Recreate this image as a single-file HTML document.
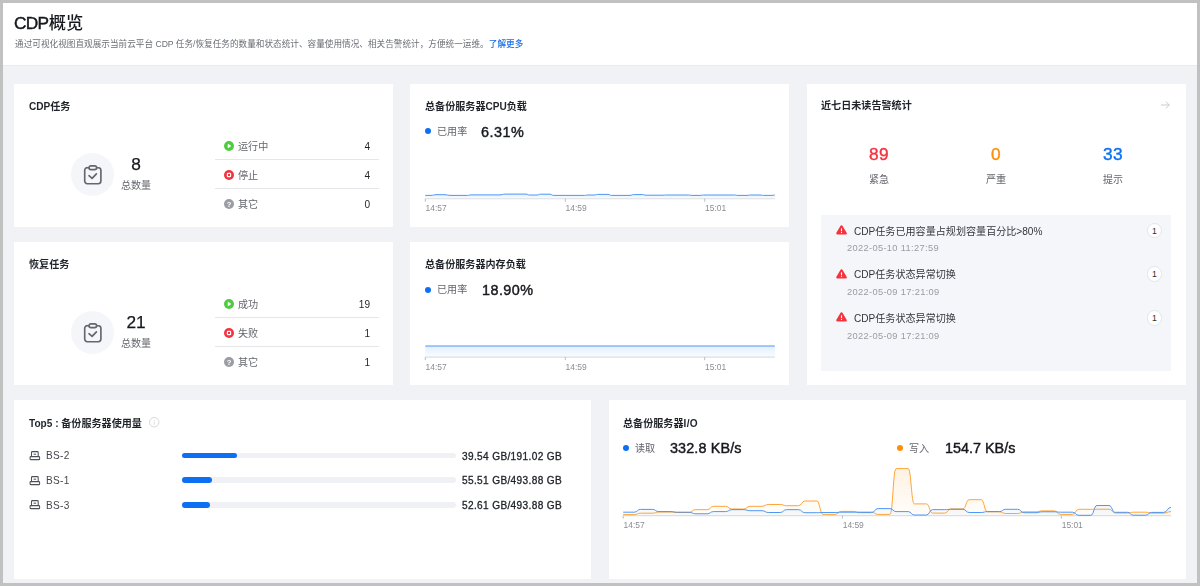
<!DOCTYPE html>
<html lang="zh-CN">
<head>
<meta charset="utf-8">
<title>CDP概览</title>
<style>
*{margin:0;padding:0;box-sizing:border-box}
html,body{width:1200px;height:586px;overflow:hidden}
body{position:relative;background:#c1c1c1;font-family:"Liberation Sans","Noto Sans CJK SC",sans-serif;color:#1f2329;-webkit-font-smoothing:antialiased}
.page{position:absolute;left:3px;top:3px;width:1194px;height:580px;background:#f0f2f6;overflow:hidden}
.hdr{position:absolute;left:0;top:0;width:1194px;height:62.6px;background:#fff;border-bottom:1px solid #e9ebef}
.card{position:absolute;background:#fff}
.t{position:absolute;margin-top:0.8px;will-change:transform;white-space:nowrap;line-height:14px;height:14px;font-size:10.08px}
.ttl{font-weight:700;color:#1f2329}
.h1{font-size:17.28px;line-height:22px;height:22px;font-weight:500;color:#16181d;margin-top:0}
.h1 i{font-style:normal;-webkit-text-stroke:0.45px #16181d;letter-spacing:-0.75px;margin-right:0.5px}
.sub{margin-top:0;font-size:8.64px;color:#6b6f76}
.sub b{font-weight:500;color:#1a6fe8}
.g{color:#63666d}
.big{margin-top:0.4px;font-size:17.28px;line-height:22px;height:22px;color:#16181d;-webkit-text-stroke:0.25px currentColor}
.mid{margin-top:0.5px;font-size:14.4px;line-height:18px;height:18px;color:#16181d;-webkit-text-stroke:0.42px currentColor}
.c{transform:translateX(-50%);text-align:center}
.r{transform:translateX(-100%);text-align:right}
.sep{position:absolute;height:0.8px;background:#e4e6ea}
.dot{position:absolute;width:6px;height:6px;border-radius:50%}
.circ{position:absolute;width:43.2px;height:43.2px;border-radius:50%;background:#f5f6fa}
.ico{will-change:transform;position:absolute;overflow:visible}
.box{position:absolute;background:#f5f6fa}
.date{font-size:9.3px;color:#999ca3;letter-spacing:0.33px}
.badge{position:absolute;width:15.8px;height:15.8px;border-radius:50%;background:#fff;border:0.8px solid #e3e5e9;font-size:8.64px;line-height:14.2px;text-align:center;color:#2b2e34;font-weight:400}
.track{position:absolute;height:5.8px;border-radius:3px;background:#f0f1f5}
.bar{position:absolute;left:0;top:0;height:5.8px;border-radius:3px;background:#0d70f2}
.val{color:#1f2329;letter-spacing:0.36px;-webkit-text-stroke:0.32px #1f2329}
.charts{will-change:transform;position:absolute;left:0;top:0;pointer-events:none}
.ax{font-family:"Liberation Sans",sans-serif;font-size:8.45px;fill:#8a8d94}

.num{letter-spacing:0.5px;-webkit-text-stroke:0.4px currentColor}
.bs{color:#43464c;letter-spacing:0.3px}

</style>
</head>
<body>
<div class="page"></div>
<div class="hdr" style="left:3px;top:3px"></div>
<div class="t h1" style="left:14.1px;top:12px"><i>CDP</i>概览</div>
<div class="t sub" style="left:14.8px;top:37px">通过可视化视图直观展示当前云平台 CDP 任务/恢复任务的数量和状态统计、容量使用情况、相关告警统计，方便统一运维。<b>了解更多</b></div>

<!-- cards -->
<div class="card" style="left:14.4px;top:83.8px;width:379px;height:143.6px"></div>
<div class="card" style="left:14.4px;top:241.8px;width:379px;height:143.4px"></div>
<div class="card" style="left:410.4px;top:83.8px;width:379px;height:143.6px"></div>
<div class="card" style="left:410.4px;top:241.8px;width:379px;height:143.4px"></div>
<div class="card" style="left:806.6px;top:83.8px;width:379.1px;height:301.4px"></div>
<div class="card" style="left:14.4px;top:399.9px;width:577px;height:178.9px"></div>
<div class="card" style="left:609px;top:399.9px;width:576.5px;height:178.9px"></div>

<!-- card 1: CDP任务 -->
<div class="t ttl" style="left:29px;top:99.2px">CDP任务</div>
<div class="circ" style="left:70.9px;top:152.8px"></div>
<svg class="ico" style="left:83.5px;top:164.8px" width="18" height="20" viewBox="0 0 18 20"><rect x="0.7" y="2.7" width="16.2" height="16" rx="2.6" fill="none" stroke="#63666d" stroke-width="1.65"/><rect x="5" y="0.8" width="7.6" height="3.8" rx="1.9" fill="#f5f6fa" stroke="#63666d" stroke-width="1.65"/><path d="M5 10.7 L8.1 13.3 L12.4 8.8" fill="none" stroke="#63666d" stroke-width="1.7" stroke-linecap="round" stroke-linejoin="round"/></svg>
<div class="t big c" style="left:136.4px;top:152.8px">8</div>
<div class="t g c" style="left:136.3px;top:178.2px">总数量</div>

<svg class="ico" style="left:224.1px;top:141.3px" width="10" height="10" viewBox="0 0 10 10"><circle cx="5" cy="5" r="5" fill="#4fcb3f"/><path d="M4.15 3.2 L4.15 6.8 L6.7 5 Z" fill="#fff" stroke="#fff" stroke-width="0.85" stroke-linejoin="round"/></svg>
<div class="t g" style="left:237.8px;top:139.1px">运行中</div>
<div class="t r" style="left:370.2px;top:139.1px">4</div>
<div class="sep" style="left:214.8px;top:159px;width:164px"></div>
<svg class="ico" style="left:224.1px;top:170.2px" width="10" height="10" viewBox="0 0 10 10"><circle cx="5" cy="5" r="5" fill="#f5333f"/><rect x="3.4" y="3.4" width="3.2" height="3.2" rx="0.6" fill="#f5333f" stroke="#fff" stroke-width="1.2"/></svg>
<div class="t g" style="left:237.8px;top:168px">停止</div>
<div class="t r" style="left:370.2px;top:168px">4</div>
<div class="sep" style="left:214.8px;top:188px;width:164px"></div>
<svg class="ico" style="left:224.1px;top:199px" width="10" height="10" viewBox="0 0 10 10"><circle cx="5" cy="5" r="5" fill="#9b9da4"/><text x="5" y="7.8" text-anchor="middle" font-family="Liberation Sans, sans-serif" font-size="7.6" font-weight="700" fill="#fff">?</text></svg>
<div class="t g" style="left:237.8px;top:196.8px">其它</div>
<div class="t r" style="left:370.2px;top:196.8px">0</div>

<!-- card 2: 恢复任务 -->
<div class="t ttl" style="left:29px;top:257.2px">恢复任务</div>
<div class="circ" style="left:70.9px;top:311px"></div>
<svg class="ico" style="left:83.5px;top:322.8px" width="18" height="20" viewBox="0 0 18 20"><rect x="0.7" y="2.7" width="16.2" height="16" rx="2.6" fill="none" stroke="#63666d" stroke-width="1.65"/><rect x="5" y="0.8" width="7.6" height="3.8" rx="1.9" fill="#f5f6fa" stroke="#63666d" stroke-width="1.65"/><path d="M5 10.7 L8.1 13.3 L12.4 8.8" fill="none" stroke="#63666d" stroke-width="1.7" stroke-linecap="round" stroke-linejoin="round"/></svg>
<div class="t big c" style="left:136.4px;top:310.8px">21</div>
<div class="t g c" style="left:136.3px;top:336.2px">总数量</div>

<svg class="ico" style="left:224.1px;top:299.3px" width="10" height="10" viewBox="0 0 10 10"><circle cx="5" cy="5" r="5" fill="#4fcb3f"/><path d="M4.15 3.2 L4.15 6.8 L6.7 5 Z" fill="#fff" stroke="#fff" stroke-width="0.85" stroke-linejoin="round"/></svg>
<div class="t g" style="left:237.8px;top:297.1px">成功</div>
<div class="t r" style="left:370.2px;top:297.1px">19</div>
<div class="sep" style="left:214.8px;top:317px;width:164px"></div>
<svg class="ico" style="left:224.1px;top:328.2px" width="10" height="10" viewBox="0 0 10 10"><circle cx="5" cy="5" r="5" fill="#f5333f"/><rect x="3.4" y="3.4" width="3.2" height="3.2" rx="0.6" fill="#f5333f" stroke="#fff" stroke-width="1.2"/></svg>
<div class="t g" style="left:237.8px;top:326px">失败</div>
<div class="t r" style="left:370.2px;top:326px">1</div>
<div class="sep" style="left:214.8px;top:346px;width:164px"></div>
<svg class="ico" style="left:224.1px;top:357px" width="10" height="10" viewBox="0 0 10 10"><circle cx="5" cy="5" r="5" fill="#9b9da4"/><text x="5" y="7.8" text-anchor="middle" font-family="Liberation Sans, sans-serif" font-size="7.6" font-weight="700" fill="#fff">?</text></svg>
<div class="t g" style="left:237.8px;top:354.8px">其它</div>
<div class="t r" style="left:370.2px;top:354.8px">1</div>

<!-- card 3: CPU -->
<div class="t ttl" style="left:425.2px;top:99.2px">总备份服务器CPU负载</div>
<div class="dot" style="left:425.1px;top:128.4px;background:#0d70f2"></div>
<div class="t g" style="left:436.9px;top:124.2px">已用率</div>
<div class="t mid" style="left:481.4px;top:122.1px;letter-spacing:0.5px">6.31%</div>

<!-- card 4: MEM -->
<div class="t ttl" style="left:425.2px;top:257.2px">总备份服务器内存负载</div>
<div class="dot" style="left:425.1px;top:286.7px;background:#0d70f2"></div>
<div class="t g" style="left:436.9px;top:282.4px">已用率</div>
<div class="t mid" style="left:482.2px;top:280.3px;letter-spacing:0.45px">18.90%</div>

<!-- card 5: alerts -->
<div class="t ttl" style="left:821.2px;top:98.6px">近七日未读告警统计</div>
<svg class="ico" style="left:1161.2px;top:101.4px" width="9" height="8" viewBox="0 0 9 8"><path d="M0.3 4 H8 M5.2 0.9 L8.2 4 L5.2 7.1" fill="none" stroke="#c4c7cc" stroke-width="0.9" stroke-linecap="round" stroke-linejoin="round"/></svg>
<div class="t big c num" style="left:879.2px;top:143.1px;color:#f5333f">89</div>
<div class="t big c num" style="left:996px;top:143.1px;color:#ff8f0a">0</div>
<div class="t big c num" style="left:1112.8px;top:143.1px;color:#0d70f2">33</div>
<div class="t g c" style="left:879.2px;top:172.6px">紧急</div>
<div class="t g c" style="left:996px;top:172.6px">严重</div>
<div class="t g c" style="left:1112.8px;top:172.6px">提示</div>
<div class="box" style="left:821px;top:214.6px;width:350px;height:156.4px"></div>

<svg class="ico" style="left:835.8px;top:225px" width="11" height="10" viewBox="0 0 11 10"><path d="M5.5 1.6 L9.5 8.3 L1.5 8.3 Z" fill="#f5333f" stroke="#f5333f" stroke-width="2.6" stroke-linejoin="round"/><rect x="4.95" y="3.2" width="1.1" height="3.1" rx="0.3" fill="#fff"/><rect x="4.95" y="7" width="1.1" height="1.1" rx="0.3" fill="#fff"/></svg>
<div class="t" style="left:854.4px;top:224px;color:#33363c">CDP任务已用容量占规划容量百分比&gt;80%</div>
<div class="t date" style="left:847.1px;top:240.3px">2022-05-10 11:27:59</div>
<div class="badge" style="left:1146.6px;top:222.5px">1</div>

<svg class="ico" style="left:835.8px;top:268.7px" width="11" height="10" viewBox="0 0 11 10"><path d="M5.5 1.6 L9.5 8.3 L1.5 8.3 Z" fill="#f5333f" stroke="#f5333f" stroke-width="2.6" stroke-linejoin="round"/><rect x="4.95" y="3.2" width="1.1" height="3.1" rx="0.3" fill="#fff"/><rect x="4.95" y="7" width="1.1" height="1.1" rx="0.3" fill="#fff"/></svg>
<div class="t" style="left:854.4px;top:267.7px;color:#33363c">CDP任务状态异常切换</div>
<div class="t date" style="left:847.1px;top:284.7px">2022-05-09 17:21:09</div>
<div class="badge" style="left:1146.6px;top:266.2px">1</div>

<svg class="ico" style="left:835.8px;top:312.4px" width="11" height="10" viewBox="0 0 11 10"><path d="M5.5 1.6 L9.5 8.3 L1.5 8.3 Z" fill="#f5333f" stroke="#f5333f" stroke-width="2.6" stroke-linejoin="round"/><rect x="4.95" y="3.2" width="1.1" height="3.1" rx="0.3" fill="#fff"/><rect x="4.95" y="7" width="1.1" height="1.1" rx="0.3" fill="#fff"/></svg>
<div class="t" style="left:854.4px;top:311.4px;color:#33363c">CDP任务状态异常切换</div>
<div class="t date" style="left:847.1px;top:328.4px">2022-05-09 17:21:09</div>
<div class="badge" style="left:1146.6px;top:309.9px">1</div>

<!-- card 6: Top5 -->
<div class="t ttl" style="left:29.3px;top:416px">Top5 : 备份服务器使用量</div>
<svg class="ico" style="left:148.5px;top:417.4px" width="10.4" height="10.4" viewBox="0 0 10.4 10.4"><circle cx="5.2" cy="5.2" r="4.7" fill="none" stroke="#c9ccd1" stroke-width="0.75"/><rect x="4.85" y="4.5" width="0.7" height="3.1" fill="#c9ccd1"/><rect x="4.85" y="2.8" width="0.7" height="0.9" fill="#c9ccd1"/></svg>

<svg class="ico" style="left:29.3px;top:451px" width="11" height="9" viewBox="0 0 11 9"><path d="M2.5 5.6 V1.5 Q2.5 0.6 3.4 0.6 H8.3 Q9.2 0.6 9.2 1.5 V5.6" fill="none" stroke="#4d5056" stroke-width="1.05"/><rect x="1.1" y="5.6" width="9.5" height="3" rx="0.7" fill="none" stroke="#4d5056" stroke-width="1.05"/><path d="M4.6 3.2 H7.1" stroke="#4d5056" stroke-width="1"/></svg>
<div class="t bs" style="left:46.3px;top:448.6px">BS-2</div>
<div class="track" style="left:181.6px;top:452.7px;width:274.4px"><div class="bar" style="width:55.3px"></div></div>
<div class="t val" style="left:462.3px;top:448.8px">39.54 GB/191.02 GB</div>

<svg class="ico" style="left:29.3px;top:475.6px" width="11" height="9" viewBox="0 0 11 9"><path d="M2.5 5.6 V1.5 Q2.5 0.6 3.4 0.6 H8.3 Q9.2 0.6 9.2 1.5 V5.6" fill="none" stroke="#4d5056" stroke-width="1.05"/><rect x="1.1" y="5.6" width="9.5" height="3" rx="0.7" fill="none" stroke="#4d5056" stroke-width="1.05"/><path d="M4.6 3.2 H7.1" stroke="#4d5056" stroke-width="1"/></svg>
<div class="t bs" style="left:46.3px;top:473.2px">BS-1</div>
<div class="track" style="left:181.6px;top:477.3px;width:274.4px"><div class="bar" style="width:30.3px"></div></div>
<div class="t val" style="left:462.3px;top:473.4px">55.51 GB/493.88 GB</div>

<svg class="ico" style="left:29.3px;top:500.2px" width="11" height="9" viewBox="0 0 11 9"><path d="M2.5 5.6 V1.5 Q2.5 0.6 3.4 0.6 H8.3 Q9.2 0.6 9.2 1.5 V5.6" fill="none" stroke="#4d5056" stroke-width="1.05"/><rect x="1.1" y="5.6" width="9.5" height="3" rx="0.7" fill="none" stroke="#4d5056" stroke-width="1.05"/><path d="M4.6 3.2 H7.1" stroke="#4d5056" stroke-width="1"/></svg>
<div class="t bs" style="left:46.3px;top:497.8px">BS-3</div>
<div class="track" style="left:181.6px;top:501.9px;width:274.4px"><div class="bar" style="width:28.7px"></div></div>
<div class="t val" style="left:462.3px;top:498px">52.61 GB/493.88 GB</div>

<!-- card 7: IO -->
<div class="t ttl" style="left:623.3px;top:416px">总备份服务器<span style="letter-spacing:0.35px">I/O</span></div>
<div class="dot" style="left:623.1px;top:444.8px;background:#0d70f2"></div>
<div class="t g" style="left:635.2px;top:440.8px">读取</div>
<div class="t mid" style="left:669.6px;top:438.7px;letter-spacing:0.12px">332.8 KB/s</div>
<div class="dot" style="left:897.3px;top:444.8px;background:#ff8f0a"></div>
<div class="t g" style="left:908.8px;top:440.8px">写入</div>
<div class="t mid" style="left:944.6px;top:438.7px">154.7 KB/s</div>


<svg class="charts" width="1200" height="586" viewBox="0 0 1200 586">
<defs>
<linearGradient id="gb" x1="0" y1="0" x2="0" y2="1"><stop offset="0" stop-color="#e3f0fe"/><stop offset="1" stop-color="#f9fcff"/></linearGradient>
<linearGradient id="gbio" gradientUnits="userSpaceOnUse" x1="0" y1="500" x2="0" y2="516"><stop offset="0" stop-color="#1677ff" stop-opacity="0.09"/><stop offset="1" stop-color="#1677ff" stop-opacity="0.02"/></linearGradient>
<linearGradient id="go" gradientUnits="userSpaceOnUse" x1="0" y1="468" x2="0" y2="516"><stop offset="0" stop-color="#ff9a1f" stop-opacity="0.13"/><stop offset="1" stop-color="#ff9a1f" stop-opacity="0.02"/></linearGradient>
</defs>
<!-- CPU -->
<path d="M425.30,195.40 L431.00,195.40 C433.50,195.40 433.50,194.70 436.00,194.70 L444.00,194.70 C447.50,194.70 447.50,195.40 451.00,195.40 L467.50,195.40 C469.25,195.40 469.25,194.90 471.00,194.90 L499.00,194.90 C502.25,194.90 502.25,194.10 505.50,194.10 L526.00,194.10 C527.75,194.10 527.75,195.00 529.50,195.00 L537.00,195.00 C538.75,195.00 538.75,194.20 540.50,194.20 L550.00,194.20 C551.75,194.20 551.75,195.40 553.50,195.40 L584.70,195.40 C586.35,195.40 586.35,195.00 588.00,195.00 L594.00,195.00 C595.75,195.00 595.75,194.40 597.50,194.40 L608.00,194.40 C609.75,194.40 609.75,195.40 611.50,195.40 L630.00,195.40 C631.75,195.40 631.75,194.60 633.50,194.60 L642.70,194.60 C644.35,194.60 644.35,195.20 646.00,195.20 L663.00,195.20 C664.75,195.20 664.75,195.00 666.50,195.00 L688.70,195.00 C690.35,195.00 690.35,195.40 692.00,195.40 L700.00,195.40 C701.75,195.40 701.75,195.00 703.50,195.00 L734.60,195.00 C736.30,195.00 736.30,195.40 738.00,195.40 L747.00,195.40 C748.75,195.40 748.75,195.00 750.50,195.00 L760.00,195.00 C761.75,195.00 761.75,195.40 763.50,195.40 L772.00,195.40 C773.40,195.40 773.40,195.00 774.80,195.00 L774.80,198.70 L425.30,198.70 Z" fill="url(#gb)"/>
<line x1="425.3" y1="198.7" x2="774.8" y2="198.7" stroke="#dddee1" stroke-width="1.1"/>
<path d="M425.30,195.40 L431.00,195.40 C433.50,195.40 433.50,194.70 436.00,194.70 L444.00,194.70 C447.50,194.70 447.50,195.40 451.00,195.40 L467.50,195.40 C469.25,195.40 469.25,194.90 471.00,194.90 L499.00,194.90 C502.25,194.90 502.25,194.10 505.50,194.10 L526.00,194.10 C527.75,194.10 527.75,195.00 529.50,195.00 L537.00,195.00 C538.75,195.00 538.75,194.20 540.50,194.20 L550.00,194.20 C551.75,194.20 551.75,195.40 553.50,195.40 L584.70,195.40 C586.35,195.40 586.35,195.00 588.00,195.00 L594.00,195.00 C595.75,195.00 595.75,194.40 597.50,194.40 L608.00,194.40 C609.75,194.40 609.75,195.40 611.50,195.40 L630.00,195.40 C631.75,195.40 631.75,194.60 633.50,194.60 L642.70,194.60 C644.35,194.60 644.35,195.20 646.00,195.20 L663.00,195.20 C664.75,195.20 664.75,195.00 666.50,195.00 L688.70,195.00 C690.35,195.00 690.35,195.40 692.00,195.40 L700.00,195.40 C701.75,195.40 701.75,195.00 703.50,195.00 L734.60,195.00 C736.30,195.00 736.30,195.40 738.00,195.40 L747.00,195.40 C748.75,195.40 748.75,195.00 750.50,195.00 L760.00,195.00 C761.75,195.00 761.75,195.40 763.50,195.40 L772.00,195.40 C773.40,195.40 773.40,195.00 774.80,195.00" fill="none" stroke="#3a8cf5" stroke-width="0.9"/>
<line x1="425.30" y1="198.70" x2="425.30" y2="201.70" stroke="#b3b6bc" stroke-width="0.9"/><text x="425.60" y="211.30" class="ax">14:57</text><line x1="565.30" y1="198.70" x2="565.30" y2="201.70" stroke="#b3b6bc" stroke-width="0.9"/><text x="565.60" y="211.30" class="ax">14:59</text><line x1="704.70" y1="198.70" x2="704.70" y2="201.70" stroke="#b3b6bc" stroke-width="0.9"/><text x="705.00" y="211.30" class="ax">15:01</text>
<!-- MEM -->
<rect x="425.3" y="346.0" width="349.49999999999994" height="11.100000000000023" fill="url(#gb)"/>
<line x1="425.3" y1="357.1" x2="774.8" y2="357.1" stroke="#dddee1" stroke-width="1.1"/>
<line x1="425.3" y1="346.0" x2="774.8" y2="346.0" stroke="#3a8cf5" stroke-width="0.9"/>
<line x1="425.30" y1="357.10" x2="425.30" y2="360.10" stroke="#b3b6bc" stroke-width="0.9"/><text x="425.60" y="370.20" class="ax">14:57</text><line x1="565.30" y1="357.10" x2="565.30" y2="360.10" stroke="#b3b6bc" stroke-width="0.9"/><text x="565.60" y="370.20" class="ax">14:59</text><line x1="704.70" y1="357.10" x2="704.70" y2="360.10" stroke="#b3b6bc" stroke-width="0.9"/><text x="705.00" y="370.20" class="ax">15:01</text>
<!-- IO -->
<path d="M623.20,514.60 L634.25,514.60 C637.36,514.60 637.36,513.20 640.46,513.20 L652.51,513.20 C655.62,513.20 655.62,512.00 658.72,512.00 L670.77,512.00 C673.88,512.00 673.88,512.50 676.98,512.50 L689.03,512.50 C692.14,512.50 692.14,509.65 695.24,509.65 L707.29,509.65 C710.40,509.65 710.40,506.30 713.50,506.30 L725.55,506.30 C728.66,506.30 728.66,509.00 731.76,509.00 L743.81,509.00 C746.92,509.00 746.92,506.30 750.02,506.30 L762.07,506.30 C765.18,506.30 765.18,504.50 768.28,504.50 L780.33,504.50 C783.44,504.50 783.44,505.70 786.54,505.70 L798.59,505.70 C801.70,505.70 801.70,501.00 804.80,501.00 L816.85,501.00 C819.96,501.00 819.96,514.40 823.06,514.40 L835.11,514.40 C838.22,514.40 838.22,511.40 841.32,511.40 L853.37,511.40 C856.48,511.40 856.48,512.00 859.58,512.00 L871.63,512.00 C874.74,512.00 874.74,514.40 877.84,514.40 L889.89,514.40 C893.00,514.40 893.00,468.60 896.10,468.60 L908.15,468.60 C911.26,468.60 911.26,503.90 914.36,503.90 L926.41,503.90 C929.52,503.90 929.52,513.10 932.62,513.10 L944.67,513.10 C947.78,513.10 947.78,508.90 950.88,508.90 L962.93,508.90 C966.04,508.90 966.04,499.70 969.14,499.70 L981.19,499.70 C984.30,499.70 984.30,511.80 987.40,511.80 L999.45,511.80 C1002.56,511.80 1002.56,513.50 1005.66,513.50 L1017.71,513.50 C1020.82,513.50 1020.82,511.80 1023.92,511.80 L1035.97,511.80 C1039.08,511.80 1039.08,510.90 1042.18,510.90 L1054.23,510.90 C1057.34,510.90 1057.34,514.40 1060.44,514.40 L1072.49,514.40 C1075.60,514.40 1075.60,509.30 1078.70,509.30 L1090.75,509.30 C1093.86,509.30 1093.86,509.20 1096.96,509.20 L1109.01,509.20 C1112.12,509.20 1112.12,513.00 1115.22,513.00 L1127.27,513.00 C1130.38,513.00 1130.38,512.20 1133.48,512.20 L1145.53,512.20 C1148.64,512.20 1148.64,513.10 1151.74,513.10 L1163.79,513.10 C1167.40,513.10 1167.40,511.60 1171.00,511.60 L1171.00,515.60 L623.20,515.60 Z" fill="url(#go)"/>
<path d="M623.20,512.20 L634.25,512.20 C637.36,512.20 637.36,509.40 640.46,509.40 L652.51,509.40 C655.62,509.40 655.62,511.60 658.72,511.60 L670.77,511.60 C673.88,511.60 673.88,512.20 676.98,512.20 L689.03,512.20 C692.14,512.20 692.14,513.75 695.24,513.75 L707.29,513.75 C710.40,513.75 710.40,511.60 713.50,511.60 L725.55,511.60 C728.66,511.60 728.66,509.65 731.76,509.65 L743.81,509.65 C746.92,509.65 746.92,510.70 750.02,510.70 L762.07,510.70 C765.18,510.70 765.18,512.50 768.28,512.50 L780.33,512.50 C783.44,512.50 783.44,509.65 786.54,509.65 L798.59,509.65 C801.70,509.65 801.70,512.70 804.80,512.70 L816.85,512.70 C819.96,512.70 819.96,512.50 823.06,512.50 L835.11,512.50 C838.22,512.50 838.22,512.20 841.32,512.20 L853.37,512.20 C856.48,512.20 856.48,512.60 859.58,512.60 L871.63,512.60 C874.74,512.60 874.74,508.60 877.84,508.60 L889.89,508.60 C893.00,508.60 893.00,511.60 896.10,511.60 L908.15,511.60 C911.26,511.60 911.26,515.00 914.36,515.00 L926.41,515.00 C929.52,515.00 929.52,509.65 932.62,509.65 L944.67,509.65 C947.78,509.65 947.78,509.30 950.88,509.30 L962.93,509.30 C966.04,509.30 966.04,512.50 969.14,512.50 L981.19,512.50 C984.30,512.50 984.30,511.60 987.40,511.60 L999.45,511.60 C1002.56,511.60 1002.56,509.30 1005.66,509.30 L1017.71,509.30 C1020.82,509.30 1020.82,512.70 1023.92,512.70 L1035.97,512.70 C1039.08,512.70 1039.08,511.80 1042.18,511.80 L1054.23,511.80 C1057.34,511.80 1057.34,512.20 1060.44,512.20 L1072.49,512.20 C1075.60,512.20 1075.60,515.30 1078.70,515.30 L1090.75,515.30 C1093.86,515.30 1093.86,505.50 1096.96,505.50 L1109.01,505.50 C1112.12,505.50 1112.12,512.30 1115.22,512.30 L1127.27,512.30 C1130.38,512.30 1130.38,515.20 1133.48,515.20 L1145.53,515.20 C1148.64,515.20 1148.64,512.40 1151.74,512.40 L1163.79,512.40 C1167.40,512.40 1167.40,507.30 1171.00,507.30 L1171.00,515.60 L623.20,515.60 Z" fill="url(#gbio)"/>
<line x1="623.2" y1="515.6" x2="1171.0" y2="515.6" stroke="#dddee1" stroke-width="1.1"/>
<path d="M623.20,514.60 L634.25,514.60 C637.36,514.60 637.36,513.20 640.46,513.20 L652.51,513.20 C655.62,513.20 655.62,512.00 658.72,512.00 L670.77,512.00 C673.88,512.00 673.88,512.50 676.98,512.50 L689.03,512.50 C692.14,512.50 692.14,509.65 695.24,509.65 L707.29,509.65 C710.40,509.65 710.40,506.30 713.50,506.30 L725.55,506.30 C728.66,506.30 728.66,509.00 731.76,509.00 L743.81,509.00 C746.92,509.00 746.92,506.30 750.02,506.30 L762.07,506.30 C765.18,506.30 765.18,504.50 768.28,504.50 L780.33,504.50 C783.44,504.50 783.44,505.70 786.54,505.70 L798.59,505.70 C801.70,505.70 801.70,501.00 804.80,501.00 L816.85,501.00 C819.96,501.00 819.96,514.40 823.06,514.40 L835.11,514.40 C838.22,514.40 838.22,511.40 841.32,511.40 L853.37,511.40 C856.48,511.40 856.48,512.00 859.58,512.00 L871.63,512.00 C874.74,512.00 874.74,514.40 877.84,514.40 L889.89,514.40 C893.00,514.40 893.00,468.60 896.10,468.60 L908.15,468.60 C911.26,468.60 911.26,503.90 914.36,503.90 L926.41,503.90 C929.52,503.90 929.52,513.10 932.62,513.10 L944.67,513.10 C947.78,513.10 947.78,508.90 950.88,508.90 L962.93,508.90 C966.04,508.90 966.04,499.70 969.14,499.70 L981.19,499.70 C984.30,499.70 984.30,511.80 987.40,511.80 L999.45,511.80 C1002.56,511.80 1002.56,513.50 1005.66,513.50 L1017.71,513.50 C1020.82,513.50 1020.82,511.80 1023.92,511.80 L1035.97,511.80 C1039.08,511.80 1039.08,510.90 1042.18,510.90 L1054.23,510.90 C1057.34,510.90 1057.34,514.40 1060.44,514.40 L1072.49,514.40 C1075.60,514.40 1075.60,509.30 1078.70,509.30 L1090.75,509.30 C1093.86,509.30 1093.86,509.20 1096.96,509.20 L1109.01,509.20 C1112.12,509.20 1112.12,513.00 1115.22,513.00 L1127.27,513.00 C1130.38,513.00 1130.38,512.20 1133.48,512.20 L1145.53,512.20 C1148.64,512.20 1148.64,513.10 1151.74,513.10 L1163.79,513.10 C1167.40,513.10 1167.40,511.60 1171.00,511.60" fill="none" stroke="#ff9a1f" stroke-width="0.9"/>
<path d="M623.20,512.20 L634.25,512.20 C637.36,512.20 637.36,509.40 640.46,509.40 L652.51,509.40 C655.62,509.40 655.62,511.60 658.72,511.60 L670.77,511.60 C673.88,511.60 673.88,512.20 676.98,512.20 L689.03,512.20 C692.14,512.20 692.14,513.75 695.24,513.75 L707.29,513.75 C710.40,513.75 710.40,511.60 713.50,511.60 L725.55,511.60 C728.66,511.60 728.66,509.65 731.76,509.65 L743.81,509.65 C746.92,509.65 746.92,510.70 750.02,510.70 L762.07,510.70 C765.18,510.70 765.18,512.50 768.28,512.50 L780.33,512.50 C783.44,512.50 783.44,509.65 786.54,509.65 L798.59,509.65 C801.70,509.65 801.70,512.70 804.80,512.70 L816.85,512.70 C819.96,512.70 819.96,512.50 823.06,512.50 L835.11,512.50 C838.22,512.50 838.22,512.20 841.32,512.20 L853.37,512.20 C856.48,512.20 856.48,512.60 859.58,512.60 L871.63,512.60 C874.74,512.60 874.74,508.60 877.84,508.60 L889.89,508.60 C893.00,508.60 893.00,511.60 896.10,511.60 L908.15,511.60 C911.26,511.60 911.26,515.00 914.36,515.00 L926.41,515.00 C929.52,515.00 929.52,509.65 932.62,509.65 L944.67,509.65 C947.78,509.65 947.78,509.30 950.88,509.30 L962.93,509.30 C966.04,509.30 966.04,512.50 969.14,512.50 L981.19,512.50 C984.30,512.50 984.30,511.60 987.40,511.60 L999.45,511.60 C1002.56,511.60 1002.56,509.30 1005.66,509.30 L1017.71,509.30 C1020.82,509.30 1020.82,512.70 1023.92,512.70 L1035.97,512.70 C1039.08,512.70 1039.08,511.80 1042.18,511.80 L1054.23,511.80 C1057.34,511.80 1057.34,512.20 1060.44,512.20 L1072.49,512.20 C1075.60,512.20 1075.60,515.30 1078.70,515.30 L1090.75,515.30 C1093.86,515.30 1093.86,505.50 1096.96,505.50 L1109.01,505.50 C1112.12,505.50 1112.12,512.30 1115.22,512.30 L1127.27,512.30 C1130.38,512.30 1130.38,515.20 1133.48,515.20 L1145.53,515.20 C1148.64,515.20 1148.64,512.40 1151.74,512.40 L1163.79,512.40 C1167.40,512.40 1167.40,507.30 1171.00,507.30" fill="none" stroke="#3a8cf5" stroke-width="0.9"/>
<line x1="623.20" y1="515.60" x2="623.20" y2="518.60" stroke="#b3b6bc" stroke-width="0.9"/><text x="623.50" y="528.20" class="ax">14:57</text><line x1="842.40" y1="515.60" x2="842.40" y2="518.60" stroke="#b3b6bc" stroke-width="0.9"/><text x="842.70" y="528.20" class="ax">14:59</text><line x1="1061.40" y1="515.60" x2="1061.40" y2="518.60" stroke="#b3b6bc" stroke-width="0.9"/><text x="1061.70" y="528.20" class="ax">15:01</text>
</svg>

</body>
</html>
